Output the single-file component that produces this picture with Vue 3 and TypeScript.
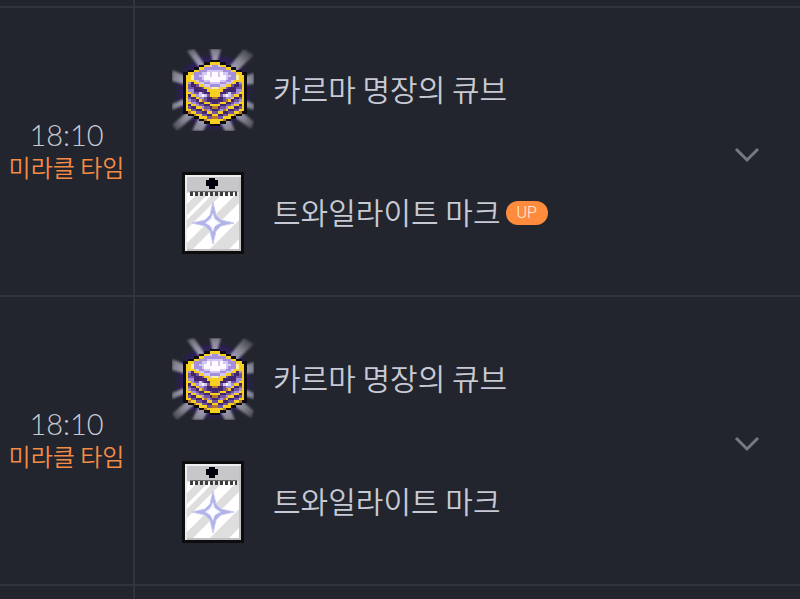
<script setup lang="ts">
interface Reward {
  name: string
  icon: 'cube' | 'mark'
  up?: boolean
}

interface Entry {
  id: number
  time: string
  event: string
  rewards: Reward[]
}

interface Pixel {
  x: number
  y: number
  fill: string
}

const entries: Entry[] = [
  {
    id: 1,
    time: '18:10',
    event: '미라클 타임',
    rewards: [
      { name: '카르마 명장의 큐브', icon: 'cube' },
      { name: '트와일라이트 마크', icon: 'mark', up: true },
    ],
  },
  {
    id: 2,
    time: '18:10',
    event: '미라클 타임',
    rewards: [
      { name: '카르마 명장의 큐브', icon: 'cube' },
      { name: '트와일라이트 마크', icon: 'mark' },
    ],
  },
]

const palette: Record<string, string> = {
  K: '#0c0810',
  Y: '#f7cf24',
  O: '#b87a2c',
  C: '#fff0a0',
  L: '#d3c8f4',
  W: '#fffaff',
  P: '#a48fdc',
  V: '#71559f',
  D: '#43286f',
}

// Left half of the cube sprite; the right half mirrors it.
const cubeHalf: string[] = [
  '..........KK',
  '........KKYY',
  '......KKYYLP',
  '....KKYYPPPP',
  '..KKYYPPPLLL',
  'KKYYPPPLLWLW',
  'KYYCPPLLWWLW',
  'KYYCPPPLWWWW',
  'KYYYYLPPLLWW',
  'KYPDYYLLPPLL',
  'KYVDDVYYLLPP',
  'KYVVDDDVYYLC',
  'KYPPDDDDDYYY',
  'KYYPVVLVDDYY',
  'KYDYYPLWLVYY',
  'KYVDDYPPVDDO',
  'KYPVVDYOVDDD',
  'KYYPPVDDYYVD',
  'KYDYYPVVDDYY',
  'KYVDDYYPVVDO',
  'KYYVVDDYOPVD',
  'KKOYYVVDDYYV',
  '..KKOYYVVDDY',
  '....KKYYYVVO',
  '......KKOYYY',
  '........KKYY',
  '..........KK',
]

const cubePixels: Pixel[] = cubeHalf.flatMap((half, y) => {
  const line = half + half.split('').reverse().join('')
  return line
    .split('')
    .map((key, x) => ({ x, y, fill: palette[key] ?? '' }))
    .filter((pixel) => pixel.fill !== '')
})
</script>

<template>
  <main class="page">
    <svg class="defs" width="0" height="0" aria-hidden="true">
      <defs>
        <radialGradient id="glow">
          <stop offset="0.65" stop-color="#35206f" />
          <stop offset="0.82" stop-color="#2d1d5c" stop-opacity="0.8" />
          <stop offset="1" stop-color="#22242d" stop-opacity="0" />
        </radialGradient>
        <radialGradient id="ray" gradientUnits="userSpaceOnUse" cx="41" cy="43" r="54">
          <stop offset="0.5" stop-color="#aaa4c4" />
          <stop offset="0.75" stop-color="#858592" />
          <stop offset="1" stop-color="#42444e" />
        </radialGradient>
        <filter id="haze" x="-10%" y="-10%" width="120%" height="120%">
          <feGaussianBlur stdDeviation="1" />
        </filter>
        <filter id="soften" x="-10%" y="-10%" width="120%" height="120%">
          <feGaussianBlur stdDeviation="0.6" />
        </filter>
      </defs>
    </svg>

    <div class="row row-edge">
      <div class="when"></div>
      <div class="detail"></div>
    </div>

    <article v-for="entry in entries" :key="entry.id" class="row">
      <header class="when">
        <time class="time">{{ entry.time }}</time>
        <span class="event">{{ entry.event }}</span>
      </header>
      <div class="detail">
        <ul class="rewards">
          <li v-for="reward in entry.rewards" :key="reward.name" class="reward">
            <svg v-if="reward.icon === 'cube'" class="icon" viewBox="0 0 82 82" aria-hidden="true">
              <circle cx="42" cy="43" r="42" fill="url(#glow)" />
              <g fill="url(#ray)" filter="url(#haze)">
                <path d="M38 0H49L45 14H41Z" />
                <path d="M15 2L22 0L33 16L27 18Z" />
                <path d="M72 0L82 6L64 23L57 18Z" />
                <path d="M0 21L14 27V36L0 32Z" />
                <path d="M82 24L70 28V36L82 35Z" />
                <path d="M0 55L12 50V56L0 61Z" />
                <path d="M0 76L15 63L22 67L5 82Z" />
                <path d="M20 82L27 68L36 73L31 82Z" />
                <path d="M53 82L48 73L57 68L63 82Z" />
                <path d="M79 80L61 67L69 62L82 73Z" />
                <path d="M82 55L70 50V57L82 61Z" />
              </g>
              <g filter="url(#soften)">
                <svg x="11" y="11" width="64" height="66" viewBox="0 0 24 27" preserveAspectRatio="none">
                  <g shape-rendering="crispEdges">
                    <rect
                      v-for="pixel in cubePixels"
                      :key="`${pixel.x}-${pixel.y}`"
                      :x="pixel.x"
                      :y="pixel.y"
                      width="1"
                      height="1"
                      :fill="pixel.fill"
                    />
                  </g>
                </svg>
              </g>
            </svg>
            <svg v-else class="icon" viewBox="0 0 82 82" aria-hidden="true">
              <g filter="url(#soften)">
                <rect x="10" y="0" width="62" height="82" rx="2" fill="#07080b" />
                <path d="M13 3H69V79H13Z" fill="#dedede" />
                <path d="M13 21H26L13 34Z M13 45L37 21H42L13 50Z M13 59L51 21H65L13 73Z M69 29V46L36 79H19Z M69 65V79H55Z" fill="#fff" />
                <path d="M13 3H69V20H13Z" fill="#c7c7c9" />
                <path d="M13 3H69V5H13Z M13 3H15V79H13Z" fill="#ededed" />
                <path d="M67 5H69V79H67Z M15 77H69V79H15Z" fill="#c1c1c1" />
                <path d="M37 6H43V8H46V14H43V17H37V14H34V8H37Z" fill="#050507" />
                <path d="M18 21.500H65" stroke="#3c3c3f" stroke-width="5" stroke-dasharray="3 2" />
                <path d="M18 19.500H65" stroke="#6c6c70" stroke-width="1" />
                <path d="M41 30L44 43L49 48L62 51L49 54L44 59L41 72L38 59L33 54L20 51L33 48L38 43Z" fill="#b1b2e7" stroke="#c8c9ef" stroke-width="1" />
                <path d="M41 41L43 47L49 51L43 54L41 60L38 54L33 51L38 47Z" fill="#eeefff" />
                <path d="M41 46L46 51L41 56L36 51Z" fill="#fff" />
              </g>
            </svg>
            <span class="name">{{ reward.name }}</span>
            <span v-if="reward.up" class="badge">UP</span>
          </li>
        </ul>
        <button class="toggle" type="button" aria-label="펼치기">
          <svg class="chevron" viewBox="0 0 28 20" aria-hidden="true">
            <path d="M3 5L14 16L25 5" fill="none" stroke="#777982" stroke-width="3" />
          </svg>
        </button>
      </div>
    </article>

    <div class="row row-rest">
      <div class="when"></div>
      <div class="detail"></div>
    </div>
  </main>
</template>

<style>
body {
  margin: 0;
  background: #22252d;
}
</style>

<style scoped>
.page {
  display: flex;
  flex-direction: column;
  min-height: 100vh;
  background: #22252d;
  color: #c7cad4;
  font-family: 'Noto Sans CJK KR', sans-serif;
  font-weight: 350;
}

.defs {
  position: absolute;
}

.row {
  display: grid;
  grid-template-columns: 133px 1fr;
  border-bottom: 2px solid #31343d;
}

.row-edge {
  height: 6px;
}

.row-rest {
  flex: 1;
  border-bottom: 0;
}

.when {
  display: flex;
  flex-direction: column;
  align-items: center;
  justify-content: center;
}

.time {
  font-family: Lato, sans-serif;
  font-size: 29px;
  font-weight: 300;
  line-height: 32px;
}

.event {
  padding-bottom: 2px;
  color: #f58b45;
  font-size: 24px;
  line-height: 32px;
  white-space: nowrap;
}

.detail {
  display: flex;
  align-items: center;
  justify-content: space-between;
  border-left: 2px solid #31343d;
}

.rewards {
  display: flex;
  flex-direction: column;
  gap: 41px;
  margin: 0;
  padding: 41px 0 41px 37px;
  list-style: none;
}

.reward {
  display: flex;
  align-items: center;
}

.icon {
  width: 82px;
  height: 82px;
  margin-right: 19px;
}

.name {
  padding-bottom: 4px;
  font-size: 30px;
  line-height: 40px;
  white-space: nowrap;
}

.badge {
  margin-left: 5px;
  padding: 0 11px;
  border-radius: 12px;
  background: #ff8b3d;
  color: #fff0e4;
  font-family: Roboto, sans-serif;
  font-size: 16px;
  line-height: 24px;
}

.toggle {
  display: flex;
  margin-right: 39px;
  padding: 4px 0 0;
  border: 0;
  background: none;
  cursor: pointer;
}

.chevron {
  width: 28px;
  height: 20px;
}
</style>
